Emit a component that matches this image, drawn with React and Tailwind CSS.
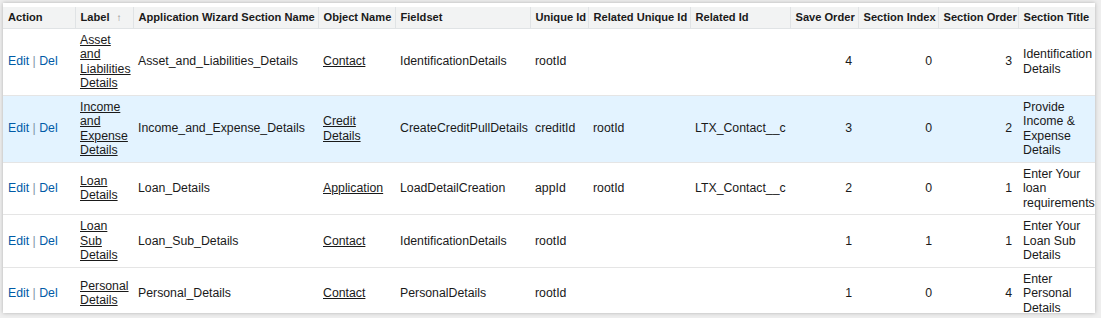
const columns = [
  { key: "action", title: "Action", width: 72 },
  { key: "label", title: "Label", width: 58, sorted: true },
  { key: "wizard", title: "Application Wizard Section Name", width: 185 },
  { key: "object", title: "Object Name", width: 77 },
  { key: "fieldset", title: "Fieldset", width: 135 },
  { key: "uniqueId", title: "Unique Id", width: 58 },
  { key: "relUnique", title: "Related Unique Id", width: 102 },
  { key: "relId", title: "Related Id", width: 100 },
  { key: "saveOrder", title: "Save Order", width: 68, num: true },
  { key: "sectionIndex", title: "Section Index", width: 80, num: true },
  { key: "sectionOrder", title: "Section Order", width: 80, num: true },
  { key: "sectionTitle", title: "Section Title", width: 77 },
];

const rows = [
  {
    label: "Asset and Liabilities Details",
    wizard: "Asset_and_Liabilities_Details",
    object: "Contact",
    fieldset: "IdentificationDetails",
    uniqueId: "rootId",
    relUnique: "",
    relId: "",
    saveOrder: 4,
    sectionIndex: 0,
    sectionOrder: 3,
    sectionTitle: "Identification Details",
  },
  {
    label: "Income and Expense Details",
    wizard: "Income_and_Expense_Details",
    object: "Credit Details",
    fieldset: "CreateCreditPullDetails",
    uniqueId: "creditId",
    relUnique: "rootId",
    relId: "LTX_Contact__c",
    saveOrder: 3,
    sectionIndex: 0,
    sectionOrder: 2,
    sectionTitle: "Provide Income & Expense Details",
    highlight: true,
  },
  {
    label: "Loan Details",
    wizard: "Loan_Details",
    object: "Application",
    fieldset: "LoadDetailCreation",
    uniqueId: "appId",
    relUnique: "rootId",
    relId: "LTX_Contact__c",
    saveOrder: 2,
    sectionIndex: 0,
    sectionOrder: 1,
    sectionTitle: "Enter Your loan requirements",
  },
  {
    label: "Loan Sub Details",
    wizard: "Loan_Sub_Details",
    object: "Contact",
    fieldset: "IdentificationDetails",
    uniqueId: "rootId",
    relUnique: "",
    relId: "",
    saveOrder: 1,
    sectionIndex: 1,
    sectionOrder: 1,
    sectionTitle: "Enter Your Loan Sub Details",
  },
  {
    label: "Personal Details",
    wizard: "Personal_Details",
    object: "Contact",
    fieldset: "PersonalDetails",
    uniqueId: "rootId",
    relUnique: "",
    relId: "",
    saveOrder: 1,
    sectionIndex: 0,
    sectionOrder: 4,
    sectionTitle: "Enter Personal Details",
  },
];

const App = () => {
  return (
    <div
      className="w-[1101px] h-[318px] overflow-hidden bg-[#eeeeee] pl-[3px] pt-[3px]"
      style={{ fontFamily: '"Liberation Sans", Arial, sans-serif' }}
    >
      {/* Card, clipped at the bottom like the captured view */}
      <div className="w-[1092px] h-[310px] overflow-hidden bg-white pt-[4px] shadow-[0_0_4px_rgba(0,0,0,0.25)]">
        <table className="table-fixed w-full border-collapse text-[12.3px] leading-[14.5px] text-[#1a1a1a]">
          <colgroup>
            {columns.map((c) => (
              <col key={c.key} style={{ width: c.width }} />
            ))}
          </colgroup>
          <thead>
            <tr className="bg-[#f2f3f3] h-[21px]">
              {columns.map((c, i) => (
                <th
                  key={c.key}
                  className={`text-[11.1px] font-bold text-[#1a1a1a] whitespace-nowrap text-left px-[5px] border-b border-[#e0e3e5] ${
                    i > 0 ? "border-l border-l-[#e0e3e5]" : ""
                  }`}
                >
                  {c.title}
                  {c.sorted && (
                    <span className="ml-[7px] text-[10px] text-[#888] font-normal">↑</span>
                  )}
                </th>
              ))}
            </tr>
          </thead>
          <tbody>
            {rows.map((r, idx) => (
              <tr
                key={idx}
                className={`${r.highlight ? "bg-[#e3f3ff]" : ""} ${
                  idx < rows.length - 1 ? "border-b border-[#e5e5e5]" : ""
                }`}
              >
                {/* Action */}
                <td className="pl-[5px] py-[4px] align-middle whitespace-nowrap">
                  <a href="#" className="text-[#015ba7]">Edit</a>
                  <span className="text-[#7f93a8]"> | </span>
                  <a href="#" className="text-[#015ba7]">Del</a>
                </td>
                {/* Label */}
                <td className="pl-[5px] pr-[1px] py-[4px] align-middle">
                  <a href="#" className="underline text-[#1a1a1a]">{r.label}</a>
                </td>
                <td className="px-[5px] py-[4px] align-middle">{r.wizard}</td>
                <td className="px-[5px] py-[4px] align-middle">
                  <a href="#" className="underline text-[#1a1a1a]">{r.object}</a>
                </td>
                <td className="px-[5px] py-[4px] align-middle whitespace-nowrap">{r.fieldset}</td>
                <td className="px-[5px] py-[4px] align-middle">{r.uniqueId}</td>
                <td className="px-[5px] py-[4px] align-middle">{r.relUnique}</td>
                <td className="px-[5px] py-[4px] align-middle whitespace-nowrap">{r.relId}</td>
                <td className="pr-[6px] py-[4px] align-middle text-right">{r.saveOrder}</td>
                <td className="pr-[6px] py-[4px] align-middle text-right">{r.sectionIndex}</td>
                <td className="pr-[6px] py-[4px] align-middle text-right">{r.sectionOrder}</td>
                <td className="pl-[5px] pr-[2px] py-[4px] align-middle">{r.sectionTitle}</td>
              </tr>
            ))}
          </tbody>
        </table>
      </div>
    </div>
  );
};

export default App;
